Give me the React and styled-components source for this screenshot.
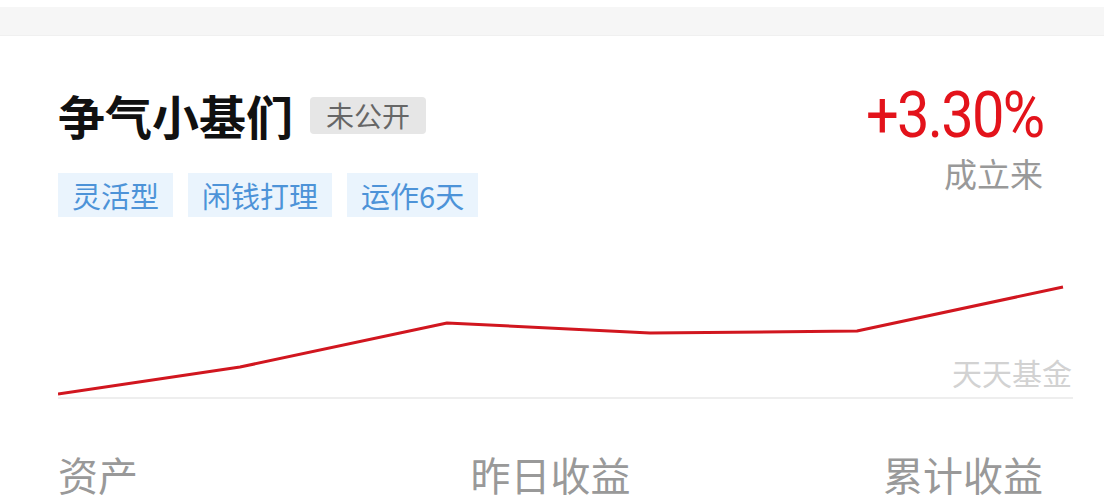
import React from "react";
import styled, { createGlobalStyle } from "styled-components";

const GlobalStyle = createGlobalStyle`
  html, body {
    margin: 0;
    padding: 0;
    background: #fff;
  }
  body {
    font-family: "Noto Sans CJK SC", "Noto Sans", sans-serif;
    overflow: hidden;
  }
`;

const Page = styled.div`
  width: 1104px;
  height: 495px;
  padding-top: 7px;
  box-sizing: border-box;
  overflow: hidden;
`;

const TopStrip = styled.div`
  height: 28px;
  background: #f6f6f6;
  border-bottom: 1px solid #f0f0f0;
`;

const Card = styled.section`
  padding: 51px 61px 0 58px;
`;

const Header = styled.div`
  display: flex;
  justify-content: space-between;
  align-items: flex-start;
`;

const TitleBlock = styled.div`
  display: flex;
  flex-direction: column;
  gap: 30px;
`;

const TitleRow = styled.div`
  display: flex;
  align-items: center;
  gap: 17px;
`;

const Title = styled.h1`
  margin: 0;
  font-size: 47px;
  line-height: 56px;
  font-weight: 700;
  color: #111;
`;

const Badge = styled.span`
  display: inline-flex;
  align-items: center;
  height: 37px;
  padding: 0 16px;
  border-radius: 4px;
  background: #e6e6e6;
  color: #666;
  font-size: 28px;
  line-height: 1;
`;

const TagRow = styled.div`
  display: flex;
  gap: 15px;
`;

const Tag = styled.span`
  display: inline-flex;
  align-items: center;
  height: 44px;
  padding: 0 14px;
  background: #eaf4fd;
  color: #4d93d8;
  font-size: 29px;
  line-height: 1;
`;

const Yield = styled.div`
  display: flex;
  flex-direction: column;
  align-items: flex-end;
`;

const Rate = styled.div`
  font-family: Roboto, "Liberation Sans", sans-serif;
  font-size: 65px;
  line-height: 52px;
  letter-spacing: -2px;
  color: ${({ $up }) => ($up ? "#e3131b" : "#1a9e3f")};
  margin-top: 2px;
  transform: scaleX(0.89);
  transform-origin: right center;
`;

const RateCaption = styled.div`
  font-size: 33px;
  line-height: 36px;
  color: #999;
  margin-top: 14px;
`;

const ChartBox = styled.div`
  position: relative;
  margin: 24px -30px 0 0;
  height: 156px;
  border-bottom: 2px solid #eeeeee;
`;

const Watermark = styled.span`
  position: absolute;
  right: 1px;
  bottom: 10px;
  font-size: 30px;
  line-height: 1;
  color: #d2d2d2;
`;

const Stats = styled.div`
  display: grid;
  grid-template-columns: 1fr 1fr 1fr;
  margin-top: 55px;
`;

const StatLabel = styled.div`
  font-size: 40px;
  line-height: 1;
  color: #999;
  text-align: ${({ $align }) => $align};
`;

const points = [
  [0, 153],
  [182, 126],
  [389, 82],
  [592, 92],
  [799, 90],
  [1005, 46],
];

const Chart = () => (
  <ChartBox>
    <svg width="1015" height="156" viewBox="0 0 1015 156">
      <polyline
        points={points.map((p) => p.join(",")).join(" ")}
        fill="none"
        stroke="#d1161f"
        strokeWidth="3"
        strokeLinejoin="round"
      />
    </svg>
    <Watermark>天天基金</Watermark>
  </ChartBox>
);

export default function App() {
  return (
    <Page>
      <GlobalStyle />
      <TopStrip />
      <Card>
        <Header>
          <TitleBlock>
            <TitleRow>
              <Title>争气小基们</Title>
              <Badge>未公开</Badge>
            </TitleRow>
            <TagRow>
              <Tag>灵活型</Tag>
              <Tag>闲钱打理</Tag>
              <Tag>运作6天</Tag>
            </TagRow>
          </TitleBlock>
          <Yield>
            <Rate $up>+3.30%</Rate>
            <RateCaption>成立来</RateCaption>
          </Yield>
        </Header>
        <Chart />
        <Stats>
          <StatLabel $align="left">资产</StatLabel>
          <StatLabel $align="center">昨日收益</StatLabel>
          <StatLabel $align="right">累计收益</StatLabel>
        </Stats>
      </Card>
    </Page>
  );
}
